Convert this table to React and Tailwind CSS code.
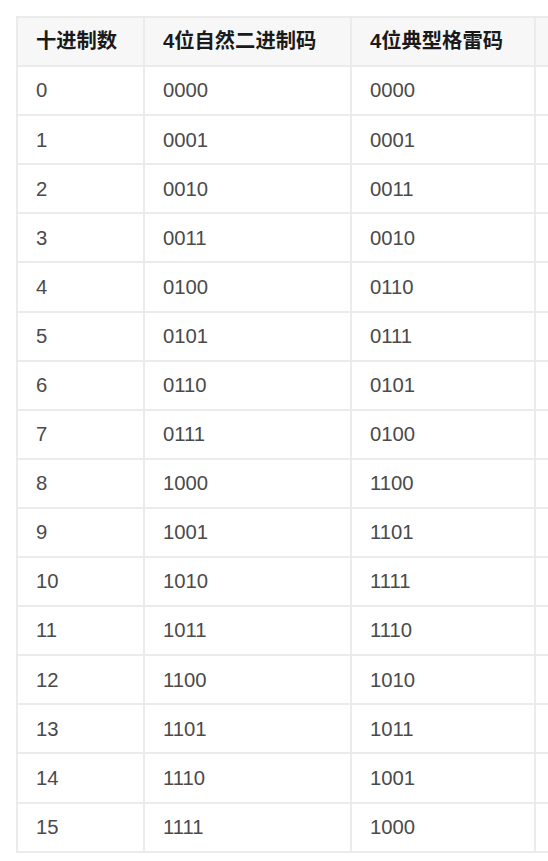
import React from 'react';

const rows = [
  ['0', '0000', '0000'],
  ['1', '0001', '0001'],
  ['2', '0010', '0011'],
  ['3', '0011', '0010'],
  ['4', '0100', '0110'],
  ['5', '0101', '0111'],
  ['6', '0110', '0101'],
  ['7', '0111', '0100'],
  ['8', '1000', '1100'],
  ['9', '1001', '1101'],
  ['10', '1010', '1111'],
  ['11', '1011', '1110'],
  ['12', '1100', '1010'],
  ['13', '1101', '1011'],
  ['14', '1110', '1001'],
  ['15', '1111', '1000'],
];

const cell = 'border-2 border-[#ebebeb] px-[18px] h-[49.1px] text-left align-middle';

export default function App() {
  return (
    <div className="w-screen h-screen overflow-hidden bg-white">
      <div className="pt-4 pl-4" style={{ fontFamily: '"Liberation Sans", Arial, "Noto Sans CJK SC", sans-serif' }}>
        <table className="table-fixed border-collapse w-[720px] text-[20.3px]">
          <colgroup>
            <col className="w-[127px]" />
            <col className="w-[207px]" />
            <col className="w-[184px]" />
            <col className="w-[202px]" />
          </colgroup>
          <thead>
            <tr className="bg-[#f7f7f7]">
              <th className={`${cell} font-bold text-[#1a1a1a]`}>十进制数</th>
              <th className={`${cell} font-bold text-[#1a1a1a]`}>4位自然二进制码</th>
              <th className={`${cell} font-bold text-[#1a1a1a]`}>4位典型格雷码</th>
              <th className={`${cell} font-bold text-[#1a1a1a]`}></th>
            </tr>
          </thead>
          <tbody>
            {rows.map((r) => (
              <tr key={r[0]}>
                {r.map((v, i) => (
                  <td key={i} className={`${cell} text-[#4a4a4a]`}>{v}</td>
                ))}
                <td className={cell}></td>
              </tr>
            ))}
          </tbody>
        </table>
      </div>
    </div>
  );
}
